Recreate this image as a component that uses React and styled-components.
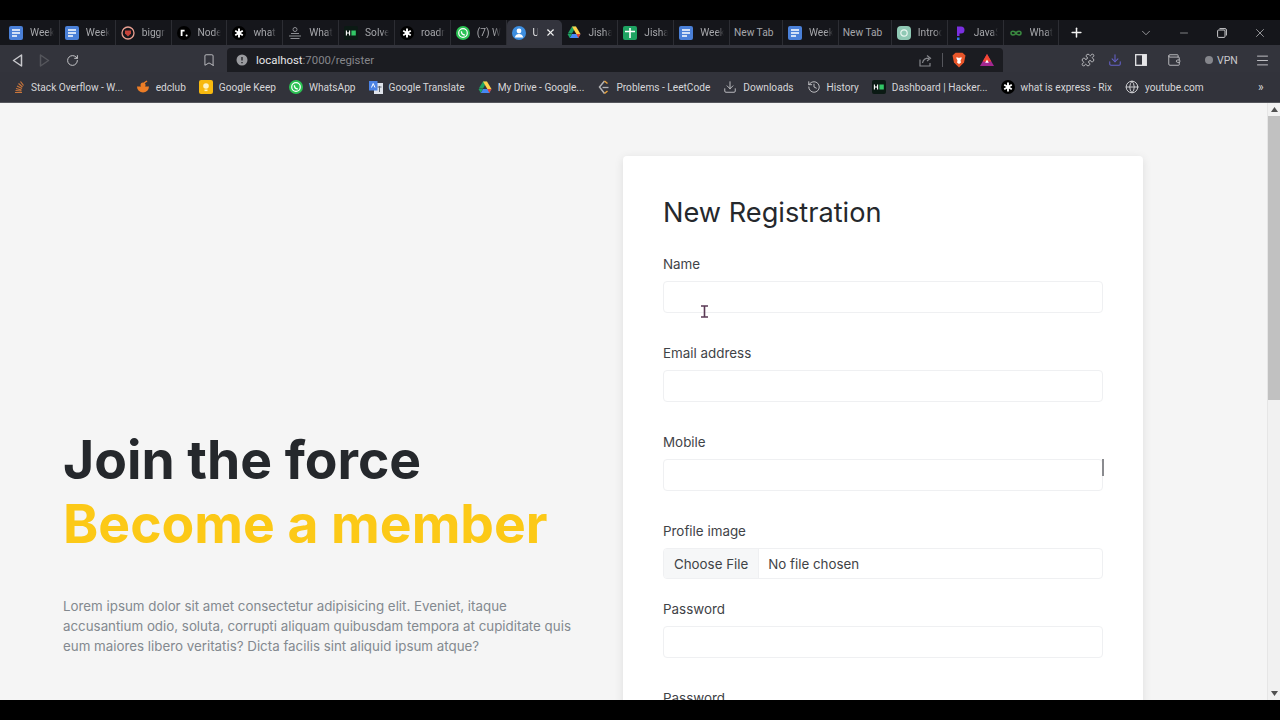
import React from "react";
import styled, { createGlobalStyle } from "styled-components";
import { Bookmark, ChevronDown, Download, Globe, History, Menu, Minus, Plus, Puzzle, RotateCw, Wallet, X } from "lucide-react";

const GlobalStyle = createGlobalStyle`
    html, body { margin: 0; padding: 0; height: 100%; overflow: hidden; background: #000; }
    * { box-sizing: border-box; }
`

const Screen = styled.div`
    width: 1280px;
    height: 720px;
    display: flex;
    flex-direction: column;
    background: #000;
`

const Letterbox = styled.div`
    height: 20px;
    flex: none;
    background: #000;
`

const TabBar = styled.div`
    height: 25px;
    flex: none;
    display: flex;
    align-items: stretch;
    padding-left: 4px;
    background: #15161b;
    font-family: Roboto, sans-serif;
    font-size: 10.2px;
`

const TabItem = styled.div`
    width: ${p => p.$narrow ? "53px" : "55.85px"};
    flex: none;
    display: flex;
    align-items: center;
    gap: 7px;
    padding: 0 5px;
    overflow: hidden;
    color: ${p => p.$active ? "#e8e8ea" : "#a6a7ab"};
    background: ${p => p.$active ? "#33343d" : "transparent"};
    border-right: 1px solid ${p => p.$active ? "transparent" : "#2c2d33"};
    border-radius: ${p => p.$active ? "5px 5px 0 0" : "0"};
`

const TabTitle = styled.span`
    white-space: nowrap;
    flex: 1;
    min-width: 0;
    overflow: hidden;
    -webkit-mask-image: linear-gradient(to right, #000 70%, transparent);
    mask-image: linear-gradient(to right, #000 70%, transparent);
`

const PlainTitle = styled.span`
    white-space: nowrap;
    margin-left: -1px;
`

const NewTab = styled.div`
    width: 26px;
    margin-left: 4px;
    display: flex;
    align-items: center;
    justify-content: center;
    color: #f2f2f2;
`

const WindowControls = styled.div`
    margin-left: auto;
    margin-right: 1px;
    display: flex;
    align-items: center;
    color: #c9c9cc;
`

const ControlCell = styled.div`
    width: 38px;
    display: flex;
    justify-content: center;
`

const Toolbar = styled.div`
    height: 27px;
    flex: none;
    display: flex;
    align-items: flex-end;
    padding: 0 0 0 12px;
    background: #33343c;
    color: #c8c8cc;
`

const NavGroup = styled.div`
    height: 24px;
    display: flex;
    align-items: center;
    gap: 16px;
    width: 215px;
`

const BookmarkToggle = styled.div`
    margin-left: auto;
    margin-right: 11px;
    display: flex;
`

const UrlBar = styled.div`
    width: 776px;
    height: 24px;
    display: flex;
    align-items: center;
    padding: 0 8px 0 9px;
    background: #1b1c21;
    border-radius: 4px 4px 0 0;
    font-family: Roboto, sans-serif;
    font-size: 11.4px;
`

const Host = styled.span`
    margin-left: 8px;
    color: #e6e6e8;
`

const UrlPath = styled.span`
    color: #85868b;
`

const UrlEnd = styled.div`
    margin-left: auto;
    display: flex;
    align-items: center;
    gap: 9px;
`

const UrlDivider = styled.div`
    width: 1px;
    height: 14px;
    background: #55565c;
`

const RewardsSlot = styled.div`
    display: flex;
    margin-left: 4px;
`

const ToolIcons = styled.div`
    flex: 1;
    height: 24px;
    display: flex;
    align-items: center;
    padding-left: 78px;
`

const ToolSlot = styled.div`
    display: flex;
    align-items: center;
    margin-left: ${p => p.$gap || 0}px;
`

const VpnBadge = styled.div`
    display: flex;
    align-items: center;
    gap: 4px;
    font-family: Roboto, sans-serif;
    font-size: 10.5px;
    color: #c8c8cc;
`

const VpnDot = styled.span`
    width: 8px;
    height: 8px;
    border-radius: 50%;
    background: #85868c;
`

const BookmarkBar = styled.div`
    height: 31px;
    flex: none;
    display: flex;
    align-items: center;
    gap: 13px;
    padding-left: 13px;
    background: #32333b;
    border-bottom: 1px solid #55565c;
    font-family: Roboto, sans-serif;
    font-size: 10.15px;
    color: #d6d6d9;
`

const BookmarkItem = styled.div`
    display: flex;
    align-items: center;
    gap: 6px;
    white-space: nowrap;
`

const More = styled.span`
    position: absolute;
    left: 1258px;
    font-size: 12px;
`

const Page = styled.div`
    flex: 1;
    min-height: 0;
    display: flex;
    overflow: hidden;
    background: #f5f5f5;
`

const Content = styled.div`
    flex: 1;
    display: flex;
    align-items: flex-start;
    font-family: Inter, sans-serif;
`

const Intro = styled.section`
    width: 623px;
    flex: none;
    padding: 325px 40px 0 63px;
`

const Headline = styled.h1`
    margin: 0;
    font-size: 53.4px;
    line-height: 64px;
    font-weight: 700;
    white-space: nowrap;
    color: ${p => p.$accent ? "#fcc917" : "#25282c"};
`

const Lorem = styled.p`
    margin: 40px 0 0;
    font-size: 13.33px;
    line-height: 20px;
    color: #83898f;
`

const Card = styled.form`
    width: 520px;
    flex: none;
    margin-top: 53px;
    padding: 39px 40px 0;
    background: #fff;
    border-radius: 4px;
    box-shadow: 0 2px 10px rgba(0, 0, 0, 0.1);
`

const CardTitle = styled.h2`
    margin: 0 0 23px;
    font-size: 27.2px;
    line-height: 36px;
    font-weight: 400;
    color: #25282c;
`

const Field = styled.label`
    display: block;
    margin-bottom: ${p => p.$tight ? "20px" : "30px"};
`

const FieldName = styled.span`
    display: block;
    margin-bottom: 7px;
    font-size: 13.4px;
    line-height: 20px;
    color: #3f4347;
`

const FieldWrap = styled.div`
    position: relative;
`

const Input = styled.input`
    display: block;
    width: 100%;
    height: 32px;
    padding: 0 10px;
    background: #fff;
    border: 1px solid #eff0f2;
    border-radius: 4px;
    outline: none;
    font-family: Inter, sans-serif;
    font-size: 13.33px;
    color: #3f4347;
`

const FileInput = styled(Input)`
    height: 31px;

    &::file-selector-button {
        height: 29px;
        padding: 0 10px;
        margin: 0 9px 0 -10px;
        background: #f6f7f8;
        border: none;
        border-right: 1px solid #eff0f2;
        font-family: Inter, sans-serif;
        font-size: 13.33px;
        color: #3f4347;
    }
`

const Caret = styled.span`
    position: absolute;
    right: -1px;
    top: 0;
    width: 2px;
    height: 17px;
    background: #8a8b8f;
`

const TextCursor = styled.svg`
    position: absolute;
    left: 37px;
    top: 24px;
`

const Scrollbar = styled.div`
    width: 13px;
    flex: none;
    display: flex;
    flex-direction: column;
    align-items: center;
    background: #f1f1f1;
    border-left: 1px solid #e6e6e6;
`

const ScrollArrow = styled.div`
    height: 13px;
    flex: none;
    display: flex;
    align-items: center;
    justify-content: center;
    width: 100%;
`

const ScrollThumb = styled.div`
    width: 100%;
    height: 284px;
    background: #c1c1c1;
`

const ScrollRest = styled.div`
    flex: 1;
`

const Square = ({ bg, radius = 2, size = 14, children }) => (
    <svg width={size} height={size} viewBox="0 0 14 14" style={{ flex: "none" }}>
        <rect width="14" height="14" rx={radius} fill={bg} />
        {children}
    </svg>
)

const Round = ({ bg, size = 14, children }) => (
    <svg width={size} height={size} viewBox="0 0 14 14" style={{ flex: "none" }}>
        <circle cx="7" cy="7" r="7" fill={bg} />
        {children}
    </svg>
)

const DocsIcon = () => (
    <Square bg="#4a80d8">
        <path d="M3 4h8M3 7h8M3 10h5" stroke="#fff" strokeWidth="1.3" />
    </Square>
)

const SheetsIcon = () => (
    <Square bg="#1ea362">
        <path d="M2 5.500h10M7 2v10" stroke="#fff" strokeWidth="1.6" />
    </Square>
)

const RixIcon = () => (
    <Round bg="#000">
        <path d="M7 2.600v8.800M3.200 4.800l7.600 4.400M10.800 4.800l-7.600 4.400" stroke="#fff" strokeWidth="1.900" />
    </Round>
)

const RoadmapIcon = () => (
    <Round bg="#000">
        <path d="M4.600 10V4.600h3" fill="none" stroke="#fff" strokeWidth="1.800" />
        <circle cx="9.600" cy="9.400" r="1" fill="#fff" />
    </Round>
)

const HackerIcon = () => (
    <Square bg="#0b1a14">
        <path d="M2.400 4.500v5M5.600 4.500v5M2.400 7h3.200" stroke="#fff" strokeWidth="1.100" />
        <rect x="7.400" y="4.500" width="4.400" height="5" fill="#32c766" />
    </Square>
)

const WhatsappIcon = () => (
    <Round bg="#2bc253">
        <circle cx="7" cy="7" r="4.300" fill="none" stroke="#fff" strokeWidth="1.200" />
        <path d="M5.400 5.200c0 2 1.400 3.600 3.400 3.800" fill="none" stroke="#fff" strokeWidth="1.300" />
    </Round>
)

const UserIcon = () => (
    <Round bg="#3d8ee0">
        <circle cx="7" cy="5" r="2.400" fill="#fff" />
        <path d="M2.800 11.600c.5-2.600 2.200-3.600 4.200-3.600s3.700 1 4.200 3.600z" fill="#fff" />
    </Round>
)

const DriveIcon = () => (
    <svg width="14" height="13" viewBox="0 0 14 13" style={{ flex: "none" }}>
        <path d="M5 .5h4L5 7.500H.8z" fill="#1fa463" />
        <path d="M9 .5l4.500 7.500H9.300L5 .5z" fill="#ffd04b" />
        <path d="M13.500 8l-2.200 4H2.700l2.300-4z" fill="#4687f4" />
        <path d="M.5 8H5l-2.300 4z" fill="#1fa463" />
        <path d="M9.300 8h4.200l-2.200 4z" fill="#e0442f" />
    </svg>
)

const BrokenCircleIcon = () => (
    <svg width="14" height="14" viewBox="0 0 14 14" style={{ flex: "none" }}>
        <circle cx="7" cy="7" r="6" fill="none" stroke="#e9a092" strokeWidth="1.300" />
        <path d="M4 4.500h6v3L7 10.500 4 7.500z" fill="#c6433a" />
    </svg>
)

const StackIcon = () => (
    <svg width="14" height="14" viewBox="0 0 14 14" style={{ flex: "none" }}>
        <circle cx="7" cy="3.500" r="2" fill="none" stroke="#8c8d92" />
        <path d="M3 7.500h8M1 10h12M2.500 12.500h9" stroke="#8c8d92" strokeWidth="1.200" />
    </svg>
)

const GptIcon = () => (
    <Square bg="#8fc8b4" radius={4}>
        <circle cx="7" cy="7" r="3.200" fill="none" stroke="#e7f5ef" strokeWidth="1.200" />
    </Square>
)

const JsIcon = () => (
    <svg width="14" height="16" viewBox="0 0 14 16" style={{ flex: "none" }}>
        <path d="M4 1.500h4a3.500 3.500 0 0 1 0 7H6.500v2.500H4z" fill="#7b2fe0" />
        <rect x="4" y="12.500" width="2.500" height="2.500" fill="#2d7be6" />
    </svg>
)

const InfinityIcon = () => (
    <svg width="14" height="10" viewBox="0 0 14 10" style={{ flex: "none" }}>
        <path d="M7 5C5.500 2.500 2 2.500 2 5s3.500 2.500 5 0 5-2.500 5 0-3.500 2.500-5 0z" fill="none" stroke="#3a8a40" strokeWidth="1.500" />
    </svg>
)

const StackOverflowIcon = () => (
    <svg width="12" height="14" viewBox="0 0 12 14" style={{ flex: "none" }}>
        <path d="M2 12.500h7M2.500 10.500l6 .5M3 8.500l5.500 1.500M4 6l5 2.500M5.500 3.500L9.500 7M7.500 1.500l3 4" stroke="#c9763c" strokeWidth="1.200" />
    </svg>
)

const EdclubIcon = () => (
    <svg width="14" height="14" viewBox="0 0 14 14" style={{ flex: "none" }}>
        <path d="M1 6.500h12a6 6 0 0 1-12 0z" fill="#ec7d26" />
        <circle cx="7" cy="5" r="2.500" fill="#ec7d26" />
        <path d="M8 3l3-2" stroke="#ec7d26" strokeWidth="1.500" />
    </svg>
)

const KeepIcon = () => (
    <Square bg="#f7b90f">
        <circle cx="7" cy="6" r="2.800" fill="#fdf3c8" />
        <rect x="5.500" y="9.500" width="3" height="1.600" fill="#fdf3c8" />
    </Square>
)

const TranslateIcon = () => (
    <svg width="14" height="13" viewBox="0 0 14 13" style={{ flex: "none" }}>
        <rect x="5" y="2" width="9" height="11" fill="#dfe3ea" />
        <rect width="8.500" height="9.500" fill="#4a82e4" />
        <path d="M2.500 6.500L4.200 2.500 6 6.500" fill="none" stroke="#fff" />
        <path d="M8.500 6h4M10.500 5v6" stroke="#5c6470" />
    </svg>
)

const LeetcodeIcon = () => (
    <svg width="13" height="15" viewBox="0 0 13 15" style={{ flex: "none" }}>
        <path d="M7.500 1L2.500 7l5 6.500" fill="none" stroke="#b3b3b6" strokeWidth="1.500" />
        <path d="M5.500 7.500h6" stroke="#b3b3b6" strokeWidth="1.300" />
        <path d="M7.500 13.500l3-2.500M7.500 1l3 2.500" stroke="#e7a13a" strokeWidth="1.500" />
    </svg>
)

const BackIcon = ({ color }) => (
    <svg width="11" height="13" viewBox="0 0 11 13">
        <path d="M9.500 1v11L1.500 6.500z" fill="none" stroke={color} strokeWidth="1.500" strokeLinejoin="round" />
    </svg>
)

const ForwardIcon = ({ color }) => (
    <svg width="11" height="13" viewBox="0 0 11 13">
        <path d="M1.500 1v11l8-5.500z" fill="none" stroke={color} strokeWidth="1.500" strokeLinejoin="round" />
    </svg>
)

const InfoIcon = () => (
    <svg width="12" height="12" viewBox="0 0 12 12">
        <circle cx="6" cy="6" r="5.500" fill="#9a9b9f" />
        <path d="M6 3v3.500M6 8v1.200" stroke="#1b1c21" strokeWidth="1.300" />
    </svg>
)

const ShareIcon = () => (
    <svg width="14" height="13" viewBox="0 0 14 13">
        <path d="M1 5.500v6.500h10V9" fill="none" stroke="#85868b" strokeWidth="1.200" />
        <path d="M3.500 9c.5-3 3-4.800 6.500-4.800M8 1.500l3.500 2.800L8 7" fill="none" stroke="#85868b" strokeWidth="1.200" />
    </svg>
)

const BraveIcon = () => (
    <svg width="14" height="16" viewBox="0 0 14 16">
        <path d="M3.500 .8h7L13.500 3.500l-1.500 7L7 15.500 2 10.500.5 3.500z" fill="#e9562a" />
        <path d="M4 5.500h2.200L7 6.300l.8-.8H10L8.500 8.500 9 10.500 7 12 5 10.500l.5-2z" fill="#fff" />
    </svg>
)

const RewardsIcon = () => (
    <svg width="16" height="14" viewBox="0 0 16 14">
        <path d="M8 1l7 12H1z" fill="#a3278f" />
        <path d="M8 1l4.300 7.400H3.700z" fill="#f4472f" />
        <path d="M8 6.500l1.800 3.200H6.200z" fill="#fff" />
    </svg>
)

const SidebarIcon = () => (
    <svg width="12" height="12" viewBox="0 0 12 12">
        <rect x=".7" y=".7" width="10.600" height="10.600" fill="none" stroke="#e6e6e8" strokeWidth="1.300" />
        <rect x="7" y="1" width="4" height="10" fill="#e6e6e8" />
    </svg>
)

const RestoreIcon = () => (
    <svg width="10" height="10" viewBox="0 0 10 10">
        <rect x=".6" y="2" width="7.400" height="7.400" rx="1" fill="none" stroke="#c9c9cc" />
        <path d="M2.500 .6h5.500a1.400 1.400 0 0 1 1.400 1.400v5.500" fill="none" stroke="#c9c9cc" />
    </svg>
)

const tabs = [
    { title: "Week", icon: <DocsIcon /> },
    { title: "Week", icon: <DocsIcon /> },
    { title: "biggr", icon: <BrokenCircleIcon /> },
    { title: "Node", icon: <RoadmapIcon /> },
    { title: "what", icon: <RixIcon /> },
    { title: "What", icon: <StackIcon /> },
    { title: "Solve", icon: <HackerIcon /> },
    { title: "roadm", icon: <RixIcon /> },
    { title: "(7) W", icon: <WhatsappIcon /> },
    { title: "U", icon: <UserIcon />, active: true },
    { title: "Jishar", icon: <DriveIcon /> },
    { title: "Jishar", icon: <SheetsIcon /> },
    { title: "Week", icon: <DocsIcon /> },
    { title: "New Tab" },
    { title: "Week", icon: <DocsIcon /> },
    { title: "New Tab" },
    { title: "Introc", icon: <GptIcon /> },
    { title: "JavaS", icon: <JsIcon /> },
    { title: "What", icon: <InfinityIcon /> },
]

const bookmarks = [
    { title: "Stack Overflow - W...", icon: <StackOverflowIcon /> },
    { title: "edclub", icon: <EdclubIcon /> },
    { title: "Google Keep", icon: <KeepIcon /> },
    { title: "WhatsApp", icon: <WhatsappIcon /> },
    { title: "Google Translate", icon: <TranslateIcon /> },
    { title: "My Drive - Google...", icon: <DriveIcon /> },
    { title: "Problems - LeetCode", icon: <LeetcodeIcon /> },
    { title: "Downloads", icon: <Download size={14} strokeWidth={1.4} /> },
    { title: "History", icon: <History size={14} strokeWidth={1.4} /> },
    { title: "Dashboard | Hacker...", icon: <HackerIcon /> },
    { title: "what is express - Rix", icon: <RixIcon /> },
    { title: "youtube.com", icon: <Globe size={14} strokeWidth={1.6} /> },
]

export default function App() {
    return <Screen>
        <GlobalStyle />
        <Letterbox />
        <TabBar>
            {tabs.map((tab, i) => <TabItem key={i} $active={tab.active} $narrow={!tab.icon}>
                {tab.icon}
                {tab.icon ? <TabTitle>{tab.title}</TabTitle> : <PlainTitle>{tab.title}</PlainTitle>}
                {tab.active && <X size={11} strokeWidth={2.4} color="#f0f0f0" />}
            </TabItem>)}
            <NewTab><Plus size={15} strokeWidth={2.4} /></NewTab>
            <WindowControls>
                <ControlCell><ChevronDown size={14} strokeWidth={1.2} /></ControlCell>
                <ControlCell><Minus size={12} strokeWidth={1.2} /></ControlCell>
                <ControlCell><RestoreIcon /></ControlCell>
                <ControlCell><X size={14} strokeWidth={1.2} /></ControlCell>
            </WindowControls>
        </TabBar>
        <Toolbar>
            <NavGroup>
                <BackIcon color="#c8c8cc" />
                <ForwardIcon color="#55565c" />
                <RotateCw size={13} strokeWidth={1.8} />
                <BookmarkToggle><Bookmark size={14} strokeWidth={1.5} /></BookmarkToggle>
            </NavGroup>
            <UrlBar>
                <InfoIcon />
                <Host>localhost</Host>
                <UrlPath>:7000/register</UrlPath>
                <UrlEnd>
                    <ShareIcon />
                    <UrlDivider />
                    <BraveIcon />
                    <RewardsSlot><RewardsIcon /></RewardsSlot>
                </UrlEnd>
            </UrlBar>
            <ToolIcons>
                <ToolSlot><Puzzle size={14} strokeWidth={1.5} /></ToolSlot>
                <ToolSlot $gap={13}><Download size={14} strokeWidth={1.8} color="#6561c9" /></ToolSlot>
                <ToolSlot $gap={13}><SidebarIcon /></ToolSlot>
                <ToolSlot $gap={20}><Wallet size={14} strokeWidth={1.5} /></ToolSlot>
                <ToolSlot $gap={24}><VpnBadge><VpnDot />VPN</VpnBadge></ToolSlot>
                <ToolSlot $gap={17}><Menu size={15} strokeWidth={1.5} /></ToolSlot>
            </ToolIcons>
        </Toolbar>
        <BookmarkBar>
            {bookmarks.map(item => <BookmarkItem key={item.title}>{item.icon}{item.title}</BookmarkItem>)}
            <More>»</More>
        </BookmarkBar>
        <Page>
            <Content>
                <Intro>
                    <Headline>Join the force</Headline>
                    <Headline $accent>Become a member</Headline>
                    <Lorem>Lorem ipsum dolor sit amet consectetur adipisicing elit. Eveniet, itaque accusantium odio, soluta, corrupti aliquam quibusdam tempora at cupiditate quis eum maiores libero veritatis? Dicta facilis sint aliquid ipsum atque?</Lorem>
                </Intro>
                <Card>
                    <CardTitle>New Registration</CardTitle>
                    <Field>
                        <FieldName>Name</FieldName>
                        <FieldWrap>
                            <Input type="text" />
                            <TextCursor width="9" height="13" viewBox="0 0 9 13">
                                <path d="M1 1h7M4.500 1v11M1 12h7" stroke="#5b3a55" strokeWidth="1.600" fill="none" />
                            </TextCursor>
                        </FieldWrap>
                    </Field>
                    <Field>
                        <FieldName>Email address</FieldName>
                        <Input type="email" />
                    </Field>
                    <Field>
                        <FieldName>Mobile</FieldName>
                        <FieldWrap>
                            <Input type="tel" />
                            <Caret />
                        </FieldWrap>
                    </Field>
                    <Field $tight>
                        <FieldName>Profile image</FieldName>
                        <FileInput type="file" />
                    </Field>
                    <Field>
                        <FieldName>Password</FieldName>
                        <Input type="password" />
                    </Field>
                    <Field>
                        <FieldName>Password</FieldName>
                        <Input type="password" />
                    </Field>
                </Card>
            </Content>
            <Scrollbar>
                <ScrollArrow>
                    <svg width="7" height="5" viewBox="0 0 7 5"><path d="M3.500 0L7 5H0z" fill="#505050" /></svg>
                </ScrollArrow>
                <ScrollThumb />
                <ScrollRest />
                <ScrollArrow>
                    <svg width="7" height="5" viewBox="0 0 7 5"><path d="M0 0h7L3.500 5z" fill="#505050" /></svg>
                </ScrollArrow>
            </Scrollbar>
        </Page>
        <Letterbox />
    </Screen>
}
